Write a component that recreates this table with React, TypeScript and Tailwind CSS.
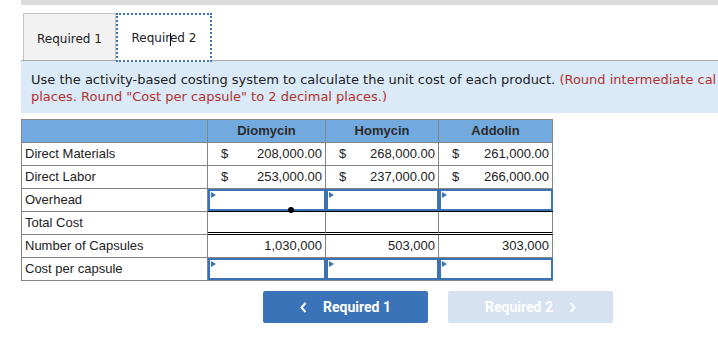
import React from "react";

const grid = "border-[#858585]";

const Pointer = () => (
  <span className="absolute left-[1px] top-[1px] w-0 h-0 border-y-[3px] border-y-transparent border-l-[5px] border-l-[#3b72b5]" />
);

const InputCell = ({ w, line, dot }: { w: string; line: string; dot?: boolean }) => (
  <div className={`${w} flex flex-col`}>
    <div className="relative flex-1 border-2 border-[#3b72b5] bg-white">
      <Pointer />
      {dot && (
        <span className="absolute left-[78px] bottom-[-4px] w-[6px] h-[6px] rounded-full bg-black" />
      )}
    </div>
    <div className={line} />
  </div>
);

const Money = ({ w, value }: { w: string; value: string }) => (
  <div className={`${w} flex items-center justify-between pl-[13px] pr-[3px] border-r border-b ${grid}`}>
    <span>$</span>
    <span>{value}</span>
  </div>
);

const Plain = ({ w, value, cls }: { w: string; value?: string; cls?: string }) => (
  <div className={`${w} flex items-center justify-end pr-[3px] border-r ${cls ?? `border-b ${grid}`}`}>
    {value}
  </div>
);

const Label = ({ text }: { text: string }) => (
  <div className={`w-[186px] flex items-center pl-[3px] border-r border-b ${grid}`}>{text}</div>
);

const cols = ["w-[118px]", "w-[113px]", "w-[114px]"];
const dbl = `${grid} border-b-[3px] border-b-black border-double`;

export default function App() {
  return (
    <div className="w-[718px] h-[363px] overflow-hidden bg-white relative">
      <div className="ml-[21px] h-[5px] bg-[#dcdcdc]" />

      {/* tabs */}
      <div className="ml-[21px] mt-[8px] h-[48px] flex pl-[2px] border-b border-[#a9a9a9] font-['DejaVu_Sans',sans-serif] text-[12px] text-[#222]">
        <div className="w-[93px] h-[47px] pt-[3px] flex items-center justify-center bg-[#f2f2f2] border-l border-t border-r border-[#c4c4c4]">
          Required 1
        </div>
        <div className="relative w-[96px] h-[49px] pt-[1px] flex items-center justify-center bg-white border-2 border-dotted border-[#3b73b9]">
          Required 2
          <span className="absolute left-[52px] top-[18px] w-[1px] h-[13px] bg-black" />
        </div>
      </div>

      {/* instructions */}
      <div className="ml-[21px] w-[900px] h-[52px] bg-[#dbeaf8] pl-[10px] pt-[10px] font-['DejaVu_Sans',sans-serif] text-[13px] leading-[17px] text-[#222] whitespace-nowrap">
        Use the activity-based costing system to calculate the unit cost of each product.{" "}
        <span className="text-[#b5312c]">(Round intermediate cal</span>
        <br />
        <span className="text-[#b5312c]">places. Round "Cost per capsule" to 2 decimal places.)</span>
      </div>

      {/* table */}
      <div className={`ml-[21px] mt-[6px] w-[532px] border-t border-l ${grid} font-['Liberation_Sans',Arial,sans-serif] text-[13px] text-[#222]`}>
        <div className="flex h-[23px] bg-[#72a9df] font-bold text-[#2b2b2b]">
          <div className={`w-[186px] border-r border-b ${grid}`} />
          {["Diomycin", "Homycin", "Addolin"].map((n, i) => (
            <div key={n} className={`${cols[i]} flex items-center justify-center border-r border-b ${grid}`}>
              {n}
            </div>
          ))}
        </div>

        <div className="flex h-[23px]">
          <Label text="Direct Materials" />
          <Money w={cols[0]} value="208,000.00" />
          <Money w={cols[1]} value="268,000.00" />
          <Money w={cols[2]} value="261,000.00" />
        </div>

        <div className="flex h-[23px]">
          <Label text="Direct Labor" />
          <Money w={cols[0]} value="253,000.00" />
          <Money w={cols[1]} value="237,000.00" />
          <Money w={cols[2]} value="266,000.00" />
        </div>

        <div className="flex h-[23px]">
          <Label text="Overhead" />
          <InputCell w={cols[0]} line="h-[1px] bg-black" dot />
          <InputCell w={cols[1]} line="h-[1px] bg-black" />
          <InputCell w={cols[2]} line="h-[1px] bg-black" />
        </div>

        <div className="flex h-[23px]">
          <Label text="Total Cost" />
          <Plain w={cols[0]} cls={dbl} />
          <Plain w={cols[1]} cls={dbl} />
          <Plain w={cols[2]} cls={dbl} />
        </div>

        <div className="flex h-[23px]">
          <Label text="Number of Capsules" />
          <Plain w={cols[0]} value="1,030,000" />
          <Plain w={cols[1]} value="503,000" />
          <Plain w={cols[2]} value="303,000" />
        </div>

        <div className="flex h-[23px]">
          <Label text="Cost per capsule" />
          <InputCell w={cols[0]} line="h-[1px] bg-[#858585]" />
          <InputCell w={cols[1]} line="h-[1px] bg-[#858585]" />
          <InputCell w={cols[2]} line="h-[1px] bg-[#858585]" />
        </div>
      </div>

      {/* nav buttons */}
      <div className="ml-[263px] mt-[10px] flex gap-[20px] font-['Roboto',sans-serif] font-bold text-[14px] text-white">
        <button className="w-[165px] h-[32px] rounded-[2px] bg-[#3a73b8] flex items-center justify-center gap-[16px]">
          <svg width="7" height="11" viewBox="0 0 7 11" fill="none">
            <path d="M5.5 1 L1.5 5.5 L5.5 10" stroke="white" strokeWidth="2" />
          </svg>
          Required 1
        </button>
        <button className="w-[165px] h-[32px] rounded-[2px] bg-[#d6e2f0] flex items-center justify-center gap-[16px]">
          Required 2
          <svg width="7" height="11" viewBox="0 0 7 11" fill="none">
            <path d="M1.5 1 L5.5 5.5 L1.5 10" stroke="white" strokeWidth="2" />
          </svg>
        </button>
      </div>
    </div>
  );
}
